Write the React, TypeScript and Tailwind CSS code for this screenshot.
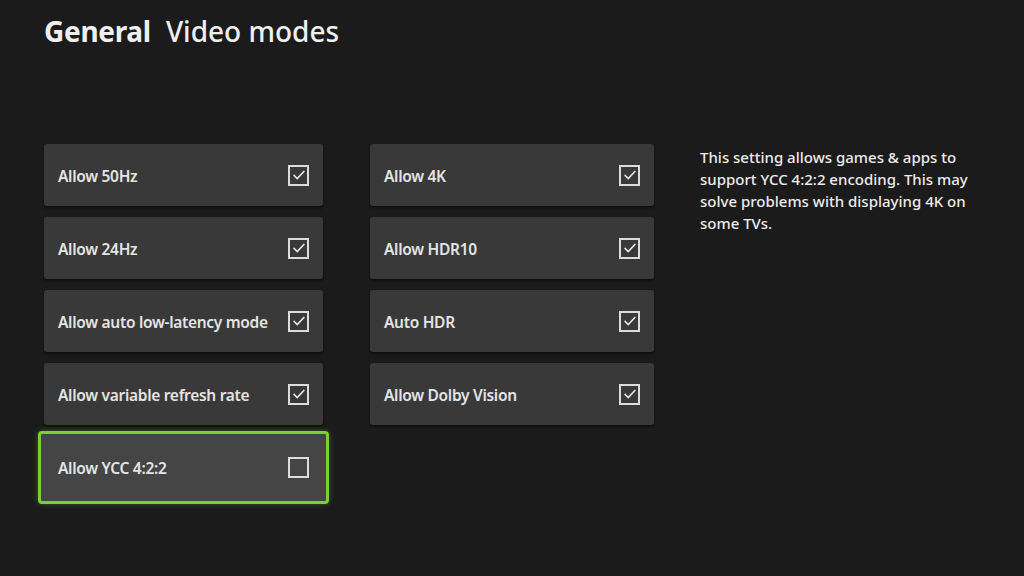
import React from 'react';

type Setting = { label: string; checked: boolean };

const leftColumn: Setting[] = [
  { label: 'Allow 50Hz', checked: true },
  { label: 'Allow 24Hz', checked: true },
  { label: 'Allow auto low-latency mode', checked: true },
  { label: 'Allow variable refresh rate', checked: true },
];

const rightColumn: Setting[] = [
  { label: 'Allow 4K', checked: true },
  { label: 'Allow HDR10', checked: true },
  { label: 'Auto HDR', checked: true },
  { label: 'Allow Dolby Vision', checked: true },
];

function CheckBox({ checked }: { checked: boolean }) {
  return (
    <div className="w-[21px] h-[21px] border-2 border-[#dcdcdc] flex items-center justify-center flex-shrink-0">
      {checked && (
        <svg viewBox="0 0 16 16" className="w-[14px] h-[14px]" fill="none" stroke="#e8e8e8" strokeWidth={1.8}>
          <path d="M2.5 8.5l3.5 3.5 7.5-8" strokeLinecap="square" />
        </svg>
      )}
    </div>
  );
}

function Tile({ item }: { item: Setting }) {
  return (
    <div className="h-[62px] bg-[#393939] rounded-[3px] flex items-center justify-between pl-[14px] pr-[14px] shadow-[0_2px_3px_rgba(0,0,0,0.5)]">
      <span className="pt-[3px] text-[15.5px] font-semibold text-[#e4e4e4] tracking-[-0.3px]">{item.label}</span>
      <CheckBox checked={item.checked} />
    </div>
  );
}

export default function App() {
  return (
    <div
      className="w-[1024px] h-[576px] bg-[#1b1b1b] text-white overflow-hidden"
      style={{ fontFamily: '"Noto Sans", "Open Sans", sans-serif' }}
    >
      <div className="pl-[44px] pt-[12px] flex items-baseline gap-[15px] text-[28px] leading-[38px] text-[#efefef]">
        <span className="font-bold tracking-[-0.3px]">General</span>
        <span className="font-medium">Video modes</span>
      </div>

      <div className="flex pl-[44px] pt-[94px]">
        <div className="w-[279px] flex flex-col gap-[11px]">
          {leftColumn.map((item) => (
            <Tile key={item.label} item={item} />
          ))}
          <div className="-mx-[6px] mt-[-5px] h-[73px] bg-[#454545] rounded-[4px] border-[3px] border-[#7ad032] flex items-center justify-between pl-[17px] pr-[17px] shadow-[0_0_6px_rgba(122,208,50,0.35)]">
            <span className="pt-[3px] text-[15.5px] font-semibold text-[#e4e4e4] tracking-[-0.3px]">Allow YCC 4:2:2</span>
            <CheckBox checked={false} />
          </div>
        </div>

        <div className="w-[284px] ml-[47px] flex flex-col gap-[11px]">
          {rightColumn.map((item) => (
            <Tile key={item.label} item={item} />
          ))}
        </div>

        <p className="ml-[46px] mt-[2px] w-[290px] text-[15px] leading-[22px] font-medium text-[#ececec]">
          This setting allows games &amp; apps to support YCC 4:2:2 encoding. This may solve problems with displaying 4K on some TVs.
        </p>
      </div>
    </div>
  );
}
